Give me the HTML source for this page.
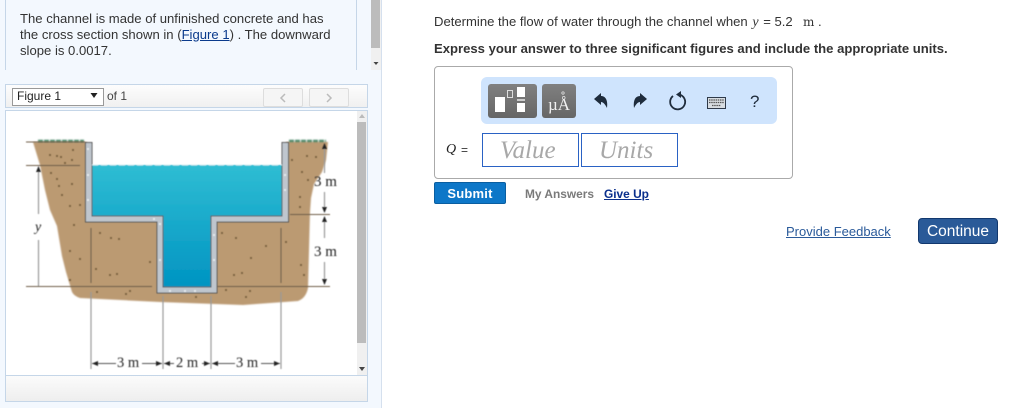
<!DOCTYPE html>
<html><head><meta charset="utf-8"><style>
html,body{margin:0;padding:0;width:1024px;height:408px;overflow:hidden;background:#fff;font-family:"Liberation Sans",sans-serif;color:#333}
.a{position:absolute}
.t{white-space:nowrap}
a{color:#0a3a8c;text-decoration:underline}
</style></head><body>
<div class="a" style="left:0;top:0;width:381px;height:408px;background:#f3f8fe;border-right:1px solid #d5e0ee"></div>
<div class="a" style="left:5px;top:0;width:350px;height:70px;border-left:1px solid #c5d6e8;border-right:1px solid #c5d6e8"></div>
<div class="a t" style="left:20px;top:11px;font-size:13.1px;line-height:16px">The channel is made of unfinished concrete and has<br>the cross section shown in (<a href="#">Figure 1</a>) . The downward<br>slope is 0.0017.</div>
<div class="a" style="left:371px;top:0;width:10px;height:70px;background:#f0f0f0"></div>
<div class="a" style="left:371px;top:0;width:9px;height:48px;background:#bcbcbc"></div>
<svg class="a" style="left:373px;top:61px" width="6" height="5"><path d="M0.5 1H5.5L3 4Z" fill="#444"/></svg>

<div class="a" style="left:5px;top:84px;width:361px;height:22px;border:1px solid #c5d6e8;background:linear-gradient(#fdfdfd,#f0f0f0)"></div>
<div class="a" style="left:12px;top:88px;width:90px;height:16px;border:1px solid #999;background:#fff"></div>
<div class="a t" style="left:17px;top:89px;font-size:12px;line-height:15px;color:#222">Figure 1</div>
<svg class="a" style="left:90px;top:92px" width="8" height="7"><path d="M0.5 1H7.5L4 6Z" fill="#222"/></svg>
<div class="a t" style="left:107px;top:89px;font-size:12px;line-height:15px;color:#444">of 1</div>
<div class="a" style="left:263px;top:88px;width:38px;height:17px;border:1px solid #ddd;background:#f5f5f5;border-radius:2px"></div>
<div class="a" style="left:309px;top:88px;width:38px;height:17px;border:1px solid #ddd;background:#f5f5f5;border-radius:2px"></div>
<svg class="a" style="left:263px;top:88px" width="90" height="19" fill="none" stroke="#bbb" stroke-width="1.5"><path d="M22 6L18 10L22 14"/><path d="M64 6L68 10L64 14"/></svg>

<div class="a" style="left:5px;top:110px;width:361px;height:265px;background:#fff;border:1px solid #c5d6e8;border-bottom:none"></div>
<div class="a" style="left:5px;top:375px;width:361px;height:25px;border:1px solid #c5d6e8;background:linear-gradient(#fbfbfb,#eeeeee)"></div>
<div class="a" style="left:357px;top:111px;width:10px;height:264px;background:#f0f0f0"></div>
<div class="a" style="left:357px;top:122px;width:9px;height:221px;background:#bcbcbc"></div>
<svg class="a" style="left:358px;top:113px" width="8" height="6"><path d="M1 5H7L4 1Z" fill="#bbb"/></svg>
<svg class="a" style="left:358px;top:366px" width="8" height="6"><path d="M1 1H7L4 5Z" fill="#444"/></svg>

<svg class="a" style="left:0;top:0" width="381" height="408">
<defs>
<linearGradient id="w" x1="0" y1="165" x2="0" y2="287" gradientUnits="userSpaceOnUse"><stop offset="0" stop-color="#2fbdd3"/><stop offset="1" stop-color="#0094c2"/></linearGradient>
<filter id="b"><feGaussianBlur stdDeviation="0.45"/></filter>
<filter id="b2"><feGaussianBlur stdDeviation="0.9"/></filter>
</defs>
<g filter="url(#b2)">
<path d="M33 142H87V220H159V290H215V220H286V142H328L326 160L322 172L314 184L311 198L310 212L308 288Q306 298 298 301L243 305L160 302L80 298Q74 296 72 292L66 272L62 256L57 226L50 210L45 190L40 165Z" fill="#bb9a72"/>
<path d="M38 141H84M289 141H326" stroke="#4d8a6a" stroke-width="2.5" stroke-dasharray="5 1"/>
</g>
<g filter="url(#b)">
<path d="M92 165H282V216H211V287H163V216H92Z" fill="url(#w)"/>
<path d="M85.500 142.500H92V216H163V287H211V216H282V142.500H288.500V222H217V293H157V222H85.500Z" fill="#bfc6ce" stroke="#555" stroke-width="1"/>
<path d="M92 165H282" stroke="#d8f0f4" stroke-width="1" stroke-dasharray="6 3"/>
<g stroke="#6f5f4c" stroke-width="1" fill="none">
<path d="M26 142H85M26 165.500H80M26 286.500H152M217 286.500H330M290 214.500H330"/>
<path d="M91 228V283M281 228V283"/>
</g>
<g stroke="#999" stroke-width="1.200" fill="none">
<path d="M38.500 170V214M38.500 240V286"/>
<path d="M324.500 146V173M324.500 192V212M324.500 218V238M324.500 262V282"/>
<path d="M91 292V369M163 296V369M211 296V369M281 292V369"/>
</g>
<g stroke="#555" stroke-width="1" fill="none"><path d="M92 363.500H116M142 363.500H162M164 363.500H174M202 363.500H210M212 363.500H235M261 363.500H280"/></g>
<g fill="#222">
<path d="M38.500 166L36 172H41Z"/><path d="M324.500 143L322 149H327Z"/><path d="M324.500 213L322 207H327Z"/><path d="M324.500 216L322 222H327Z"/><path d="M324.500 285L322 279H327Z"/>
<path d="M92 363.500L98 361V366Z"/><path d="M162 363.500L156 361V366Z"/><path d="M164 363.500L170 361V366Z"/><path d="M210 363.500L204 361V366Z"/><path d="M212 363.500L218 361V366Z"/><path d="M280 363.500L274 361V366Z"/>
</g>
<g fill="#6f5638">
<circle cx="50" cy="155" r="1"/><circle cx="57" cy="156" r="1"/><circle cx="61" cy="157" r="1"/><circle cx="73" cy="150" r="1"/><circle cx="72" cy="160" r="1"/><circle cx="65" cy="163" r="1"/><circle cx="51" cy="173" r="1"/><circle cx="57" cy="179" r="1"/><circle cx="72" cy="184" r="1"/><circle cx="59" cy="186" r="1"/><circle cx="62" cy="195" r="1"/><circle cx="70" cy="206" r="1"/><circle cx="80" cy="205" r="1"/><circle cx="74" cy="225" r="1"/><circle cx="100" cy="233" r="1"/><circle cx="111" cy="238" r="1"/><circle cx="119" cy="239" r="1"/><circle cx="70" cy="251" r="1"/><circle cx="80" cy="259" r="1"/><circle cx="96" cy="269" r="1"/><circle cx="110" cy="275" r="1"/><circle cx="117" cy="274" r="1"/><circle cx="70" cy="280" r="1"/><circle cx="150" cy="262" r="1"/><circle cx="97" cy="292" r="1"/><circle cx="130" cy="291" r="1"/><circle cx="126" cy="294" r="1"/><circle cx="196" cy="297" r="1"/><circle cx="226" cy="290" r="1"/><circle cx="250" cy="291" r="1"/><circle cx="246" cy="297" r="1"/><circle cx="222" cy="233" r="1"/><circle cx="236" cy="238" r="1"/><circle cx="251" cy="258" r="1"/><circle cx="266" cy="246" r="1"/><circle cx="286" cy="242" r="1"/><circle cx="301" cy="265" r="1"/><circle cx="304" cy="275" r="1"/><circle cx="234" cy="275" r="1"/><circle cx="242" cy="273" r="1"/><circle cx="292" cy="160" r="1"/><circle cx="307" cy="156" r="1"/><circle cx="316" cy="157" r="1"/><circle cx="302" cy="172" r="1"/><circle cx="308" cy="180" r="1"/><circle cx="300" cy="207" r="1"/><circle cx="300" cy="197" r="1"/>
</g>
<g fill="#eef3f6"><circle cx="88" cy="149" r="1"/><circle cx="88" cy="175" r="1"/><circle cx="88" cy="200" r="1"/><circle cx="154" cy="219" r="1"/><circle cx="160" cy="224" r="1"/><circle cx="160" cy="260" r="1"/><circle cx="214" cy="260" r="1"/><circle cx="214" cy="235" r="1"/><circle cx="170" cy="291" r="1"/><circle cx="185" cy="291" r="1"/><circle cx="195" cy="291" r="1"/><circle cx="285" cy="175" r="1"/><circle cx="285" cy="190" r="1"/></g>
<g font-family="Liberation Serif,serif" fill="#222">
<g font-size="15"><text x="314" y="186">3 m</text><text x="314" y="256">3 m</text></g>
<g font-size="14.5"><text x="117" y="367">3 m</text><text x="176" y="367">2 m</text><text x="236" y="367">3 m</text></g>
<text x="35" y="231" font-size="14" font-style="italic">y</text>
</g>
</g>
</svg>

<div class="a t" style="left:434px;top:14px;font-size:13.1px;line-height:16px">Determine the flow of water through the channel when <span style="font-family:'Liberation Serif',serif;font-style:italic;font-size:14px;margin:0 1px">y</span> = 5.2 &nbsp;<span style="font-family:'DejaVu Serif',serif;font-size:12px;margin-left:3px">m</span> .</div>
<div class="a t" style="left:434px;top:41px;font-size:13.1px;line-height:16px;font-weight:bold">Express your answer to three significant figures and include the appropriate units.</div>

<div class="a" style="left:434px;top:66px;width:357px;height:111px;border:1px solid #aaa;border-radius:4px;background:#fff"></div>
<div class="a" style="left:481px;top:77px;width:296px;height:47px;background:#cfe4fd;border-radius:6px"></div>
<div class="a" style="left:488px;top:84px;width:49px;height:34px;border-radius:3px;background:linear-gradient(#808080,#666)"></div>
<div class="a" style="left:542px;top:84px;width:34px;height:34px;border-radius:3px;background:linear-gradient(#808080,#666)"></div>
<svg class="a" style="left:480px;top:78px" width="300" height="48">
<rect x="15" y="19" width="10" height="15" fill="#fff"/>
<rect x="27.500" y="12.500" width="5" height="7" fill="none" stroke="#ddd"/>
<rect x="37" y="9" width="8" height="10" fill="#fff"/><rect x="37" y="21" width="8" height="2" fill="#ccc"/><rect x="37" y="25" width="8" height="9" fill="#fff"/>
<text x="68" y="32" font-family="Liberation Serif,serif" font-size="17" fill="#f0f0f0">µÅ</text>
<circle cx="83" cy="15" r="1.200" fill="none" stroke="#eee" stroke-width=".7"/>
<path d="M114 21L121 15V18C126 18 128 23 127 30C125 26 123 24 121 24V27Z" fill="#1f2c3c"/>
<path d="M114 21L121 15V18C126 18 128 23 127 30C125 26 123 24 121 24V27Z" fill="#1f2c3c" transform="translate(281,0) scale(-1,1)"/>
<path d="M193 18A7.500 7.500 0 1 0 199 16.500" fill="none" stroke="#1f2c3c" stroke-width="1.800"/>
<path d="M201 13V20L196 16.500Z" fill="#1f2c3c"/>
<rect x="227.500" y="19.500" width="18" height="11" fill="#d8dde2" stroke="#2f3a4a"/>
<path d="M229 22H244M229 24.500H244M232 27.500H241" stroke="#555" stroke-width="1.300" stroke-dasharray="1.500 .7"/>
<text x="270" y="29" font-size="17" fill="#1f2c3c">?</text>
</svg>
<div class="a t" style="left:446px;top:142px;font-family:'Liberation Serif',serif;font-style:italic;font-size:14px;line-height:16px;color:#222">Q</div>
<div class="a t" style="left:461px;top:142px;font-size:12px;line-height:16px;color:#333">=</div>
<div class="a" style="left:482px;top:133px;width:95px;height:32px;border:1px solid #2a62c4;background:#fff"></div>
<div class="a" style="left:581px;top:133px;width:95px;height:32px;border:1px solid #2a62c4;background:#fff"></div>
<div class="a t" style="left:500px;top:137px;font-family:'Liberation Serif',serif;font-style:italic;font-size:25px;line-height:28px;color:#a8a8a8">Value</div>
<div class="a t" style="left:599px;top:137px;font-family:'Liberation Serif',serif;font-style:italic;font-size:25px;line-height:28px;color:#a8a8a8">Units</div>

<div class="a t" style="left:434px;top:182px;width:70px;height:20px;line-height:21px;text-align:center;background:#0d77c8;border:1px solid #0a5ea0;border-radius:2px;color:#fff;font-size:13px;font-weight:bold;letter-spacing:.2px">Submit</div>
<div class="a t" style="left:525px;top:187px;font-size:11.9px;line-height:15px;font-weight:bold;color:#7a7a7a">My Answers</div>
<a class="a t" href="#" style="left:604px;top:187px;font-size:11.9px;line-height:15px;font-weight:bold;color:#0a2f8c">Give Up</a>
<a class="a t" href="#" style="left:786px;top:224px;font-size:13px;line-height:16px;color:#2a5a9a">Provide Feedback</a>
<div class="a t" style="left:918px;top:218px;width:78px;height:24px;line-height:25px;text-align:center;background:#2a5a98;border:1px solid #12386e;border-radius:4px;color:#fff;font-size:15.500px">Continue</div>
</body></html>
